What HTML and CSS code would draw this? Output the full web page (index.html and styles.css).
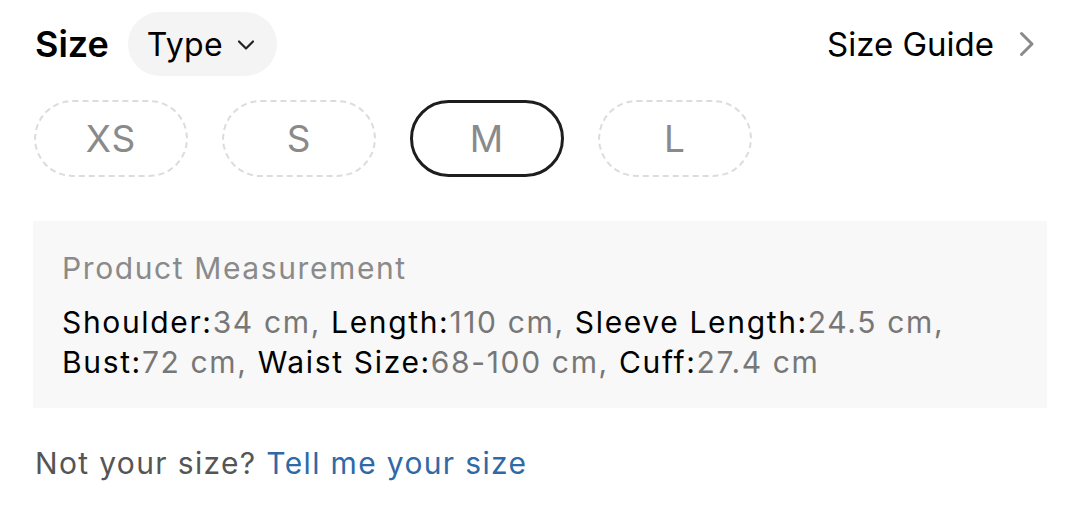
FILE: index.html
```html
<!DOCTYPE html>
<html>
<head>
<meta charset="utf-8">
<link rel="stylesheet" href="styles.css">
</head>
<body>
<div class="page">
  <div class="header">
    <div class="left">
      <span class="title">Size</span>
      <span class="type-pill">Type
        <svg class="chev-down" width="20" height="12" viewBox="0 0 20 12"><path d="M3 2.5 L10 9.5 L17 2.5" fill="none" stroke="#222" stroke-width="2.2" stroke-linecap="round" stroke-linejoin="round"/></svg>
      </span>
    </div>
    <div class="guide">
      <span>Size Guide</span>
      <svg class="chev-right" width="18" height="28" viewBox="0 0 18 28"><path d="M3.5 3.5 L14 14 L3.5 24.5" fill="none" stroke="#8a8a8a" stroke-width="3" stroke-linecap="round" stroke-linejoin="round"/></svg>
    </div>
  </div>
  <div class="sizes">
    <div class="size-btn na">XS</div>
    <div class="size-btn na">S</div>
    <div class="size-btn selected">M</div>
    <div class="size-btn na">L</div>
  </div>
  <div class="measure">
    <div class="m-title">Product Measurement</div>
    <div class="m-body"><span class="k">Shoulder:</span><span class="v">34 cm, </span><span class="k">Length:</span><span class="v">110 cm, </span><span class="k">Sleeve Length:</span><span class="v">24.5 cm, </span><span class="k">Bust:</span><span class="v">72 cm, </span><span class="k">Waist Size:</span><span class="v">68-100 cm, </span><span class="k">Cuff:</span><span class="v">27.4 cm</span></div>
  </div>
  <div class="footer">Not your size? <span class="link">Tell me your size</span></div>
</div>
</body>
</html>
```
FILE: styles.css
```css
html, body {
  margin: 0;
  padding: 0;
  background: #fff;
}
body {
  font-family: Inter, "Liberation Sans", Arial, sans-serif;
  color: #000;
}
.page {
  padding: 12px 33px 0 33px;
}
.header {
  display: flex;
  align-items: center;
  justify-content: space-between;
  height: 64px;
}
.left {
  display: flex;
  align-items: center;
  gap: 19px;
}
.title {
  font-size: 36px;
  font-weight: 600;
  padding-left: 2px;
}
.type-pill {
  display: flex;
  align-items: center;
  gap: 13px;
  height: 64px;
  padding: 0 21px 0 19px;
  box-sizing: border-box;
  border-radius: 32px;
  background: #f4f4f4;
  font-size: 32px;
  letter-spacing: 0.3px;
}
.chev-down {
  margin-top: 2px;
}
.guide {
  display: flex;
  align-items: center;
  gap: 24px;
  font-size: 33px;
  padding-right: 11px;
}
.sizes {
  display: flex;
  gap: 34px;
  margin-top: 24px;
  padding-left: 1px;
}
.size-btn {
  width: 154px;
  height: 77px;
  box-sizing: border-box;
  border-radius: 39px;
  display: flex;
  align-items: center;
  justify-content: center;
  font-size: 37px;
  letter-spacing: 1px;
  color: #8a8a8a;
}
.size-btn.na {
  border: 2px dashed #dcdcdc;
}
.size-btn.selected {
  border: 3px solid #1e1e1e;
}
.measure {
  margin-top: 44px;
  background: #f8f8f8;
  height: 187px;
  box-sizing: border-box;
  padding: 27px 29px 0 29px;
}
.m-title {
  font-size: 30px;
  color: #8a8a8a;
  line-height: 40px;
  letter-spacing: 1.6px;
}
.m-body {
  margin-top: 14px;
  font-size: 30px;
  line-height: 40px;
  letter-spacing: 1.65px;
}
.k {
  color: #000;
}
.v {
  color: #777;
}
.footer {
  margin-top: 35px;
  font-size: 30px;
  line-height: 40px;
  letter-spacing: 1.35px;
  color: #555;
  padding-left: 2px;
}
.link {
  color: #2f6aa6;
}
```
